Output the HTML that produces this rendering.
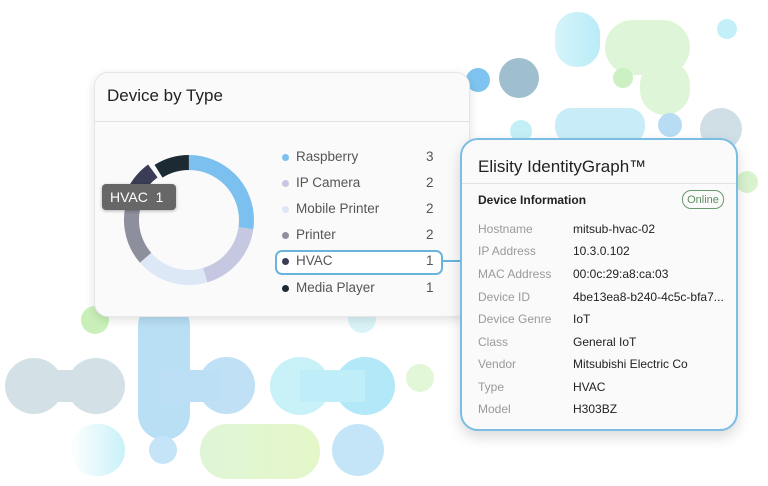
<!DOCTYPE html>
<html><head><style>
*{margin:0;padding:0;box-sizing:border-box}
body{width:768px;height:486px;background:#fff;position:relative;overflow:hidden;font-family:"Liberation Sans",sans-serif}
.b{position:absolute;border-radius:50%}
.card1{position:absolute;left:94px;top:72px;width:376px;height:245px;background:#fafafa;border:1px solid #e6e6e6;border-radius:14px;box-shadow:0 3px 10px rgba(0,0,0,.12)}
.t{position:absolute;white-space:nowrap}
.card2{position:absolute;left:460px;top:138px;width:278px;height:293px;background:#fafafa;border:2px solid #7bbde3;border-radius:18px;box-shadow:0 6px 14px rgba(0,0,0,.15)}
.lg{position:absolute;font-size:13.5px;color:#555}
.dot{position:absolute;width:7px;height:7px;border-radius:50%}
.lb{position:absolute;left:16px;font-size:12px;color:#9a9a9a}
.vl{position:absolute;left:111px;font-size:12px;color:#222}
</style></head><body>
<div class="b" style="left:555px;top:12px;width:45px;height:55px;background:linear-gradient(90deg,#d6f4fb,#b9ecf7);border-radius:22px"></div>
<div class="b" style="left:605px;top:20px;width:85px;height:55px;background:#dff5d8;border-radius:28px"></div>
<div class="b" style="left:640px;top:60px;width:50px;height:55px;background:#dff5d8;border-radius:25px"></div>
<div class="b" style="left:717px;top:19px;width:20px;height:20px;background:#c3f0f8"></div>
<div class="b" style="left:499px;top:58px;width:40px;height:40px;background:#9fbfcf"></div>
<div class="b" style="left:466px;top:68px;width:24px;height:24px;background:#7fc4f0"></div>
<div class="b" style="left:613px;top:68px;width:20px;height:20px;background:#cdf0c3"></div>
<div class="b" style="left:510px;top:120px;width:22px;height:22px;background:#c3eff7"></div>
<div class="b" style="left:555px;top:108px;width:90px;height:35px;background:#c8edf8;border-radius:16px"></div>
<div class="b" style="left:658px;top:113px;width:24px;height:24px;background:#b8dcf3"></div>
<div class="b" style="left:700px;top:108px;width:42px;height:42px;background:#cfdfe5"></div>
<div class="b" style="left:736px;top:171px;width:22px;height:22px;background:#d9f3cf"></div>
<div class="b" style="left:81px;top:306px;width:28px;height:28px;background:#c9f0b9"></div>
<div class="b" style="left:138px;top:300px;width:52px;height:140px;background:#b9dff5;border-radius:26px"></div>
<div class="b" style="left:198px;top:357px;width:57px;height:57px;background:#bfe0f5"></div>
<div style="position:absolute;left:160px;top:370px;width:60px;height:32px;background:#bcdff5"></div>
<div class="b" style="left:5px;top:358px;width:58px;height:56px;background:#d3e1e6"></div>
<div class="b" style="left:67px;top:358px;width:58px;height:56px;background:#d3e1e6"></div>
<div style="position:absolute;left:34px;top:370px;width:62px;height:32px;background:#d3e1e6"></div>
<div class="b" style="left:270px;top:357px;width:60px;height:58px;background:#c9f1f8"></div>
<div class="b" style="left:335px;top:357px;width:60px;height:58px;background:#b3e8f8"></div>
<div style="position:absolute;left:300px;top:370px;width:65px;height:32px;background:#bfedf8"></div>
<div class="b" style="left:348px;top:305px;width:28px;height:28px;background:#d9f4f8"></div>
<div class="b" style="left:406px;top:364px;width:28px;height:28px;background:#e1f7d7"></div>
<div class="b" style="left:70px;top:424px;width:55px;height:52px;background:linear-gradient(90deg,#fff,#c9f1f8);border-radius:26px"></div>
<div class="b" style="left:149px;top:436px;width:28px;height:28px;background:#c5e4f7"></div>
<div class="b" style="left:200px;top:424px;width:120px;height:55px;background:linear-gradient(90deg,#dff5d7,#e5f7c8);border-radius:27px"></div>
<div class="b" style="left:332px;top:424px;width:52px;height:52px;background:#c4e5f7"></div>

<div class="card1">
  <div class="t" style="left:12px;top:13px;font-size:17px;color:#222">Device by Type</div>
  <div style="position:absolute;left:0;right:0;top:48px;border-top:1px solid #e2e2e2"></div>
  <svg style="position:absolute;left:0;top:0" width="376" height="245">
    <g transform="translate(94,147) rotate(-90)" fill="none" stroke-width="15">
      <circle r="57.5" stroke="#7cc0f0" stroke-dasharray="98.5 400" />
      <circle r="57.5" stroke="#c5c8e0" stroke-dasharray="65.7 400" transform="rotate(98.2)"/>
      <circle r="57.5" stroke="#dde8f6" stroke-dasharray="65.7 400" transform="rotate(163.6)"/>
      <circle r="57.5" stroke="#8e8f9c" stroke-dasharray="65.7 400" transform="rotate(229)"/>
      <circle r="61" stroke="#3b3d56" stroke-width="16" stroke-dasharray="31 400" transform="rotate(294.5)"/>
      <circle r="57.5" stroke="#1b2a33" stroke-dasharray="32 400" transform="rotate(328)"/>
    </g>
  </svg>
  <div style="position:absolute;left:7px;top:111px;width:74px;height:26px;background:#676767;border-radius:4px;box-shadow:0 1px 3px rgba(0,0,0,.3);color:#fff;font-size:14px;line-height:26px;padding-left:8px">HVAC&nbsp;&nbsp;1</div>
  <div style="position:absolute;left:180px;top:177px;width:168px;height:25px;border:2px solid #6ab4dc;border-radius:7px;background:#fff"></div>
  <div class="dot" style="left:187px;top:81px;background:#7cc0f0"></div><div class="lg" style="left:201px;top:76px">Raspberry</div><div class="lg" style="left:331px;top:76px">3</div>
  <div class="dot" style="left:187px;top:107px;background:#c5c8e0"></div><div class="lg" style="left:201px;top:102px">IP Camera</div><div class="lg" style="left:331px;top:102px">2</div>
  <div class="dot" style="left:187px;top:133px;background:#dde8f6"></div><div class="lg" style="left:201px;top:128px">Mobile Printer</div><div class="lg" style="left:331px;top:128px">2</div>
  <div class="dot" style="left:187px;top:159px;background:#8e8f9c"></div><div class="lg" style="left:201px;top:154px">Printer</div><div class="lg" style="left:331px;top:154px">2</div>
  <div class="dot" style="left:187px;top:185px;background:#3b3d56"></div><div class="lg" style="left:201px;top:180px">HVAC</div><div class="lg" style="left:331px;top:180px">1</div>
  <div class="dot" style="left:187px;top:212px;background:#1b2a33"></div><div class="lg" style="left:201px;top:207px">Media Player</div><div class="lg" style="left:331px;top:207px">1</div>
</div>
<div style="position:absolute;left:442px;top:260px;width:20px;border-top:2px solid #6ab4dc"></div>

<div class="card2">
  <div class="t" style="left:16px;top:17px;font-size:17px;color:#222">Elisity IdentityGraph™</div>
  <div style="position:absolute;left:0;right:0;top:43px;border-top:1px solid #e2e2e2"></div>
  <div class="t" style="left:16px;top:53px;font-size:12px;color:#222;font-weight:600">Device Information</div>
  <div style="position:absolute;left:220px;top:50px;width:42px;height:19px;border:1.5px solid #6a9a6f;border-radius:9px;font-size:11px;color:#5d8d62;display:flex;align-items:center;justify-content:center">Online</div>
  <div class="lb" style="top:82px">Hostname</div><div class="vl" style="top:82px">mitsub-hvac-02</div>
  <div class="lb" style="top:104px">IP Address</div><div class="vl" style="top:104px">10.3.0.102</div>
  <div class="lb" style="top:127px">MAC Address</div><div class="vl" style="top:127px">00:0c:29:a8:ca:03</div>
  <div class="lb" style="top:150px">Device ID</div><div class="vl" style="top:150px">4be13ea8-b240-4c5c-bfa7...</div>
  <div class="lb" style="top:172px">Device Genre</div><div class="vl" style="top:172px">IoT</div>
  <div class="lb" style="top:195px">Class</div><div class="vl" style="top:195px">General IoT</div>
  <div class="lb" style="top:217px">Vendor</div><div class="vl" style="top:217px">Mitsubishi Electric Co</div>
  <div class="lb" style="top:240px">Type</div><div class="vl" style="top:240px">HVAC</div>
  <div class="lb" style="top:262px">Model</div><div class="vl" style="top:262px">H303BZ</div>
</div>
</body></html>
